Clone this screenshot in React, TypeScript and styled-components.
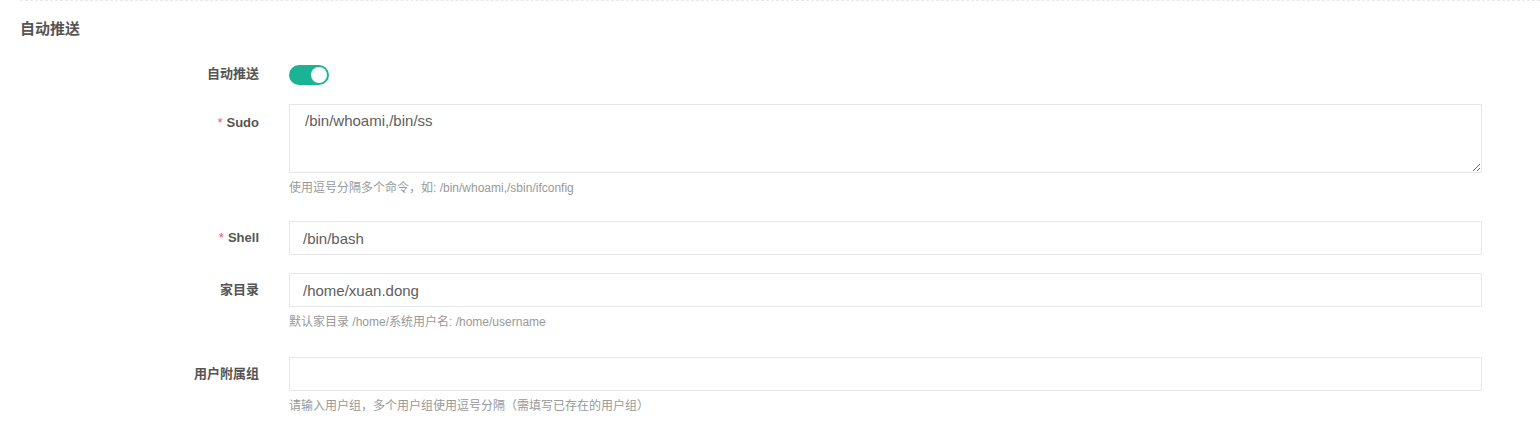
import React from "react";
import styled, {createGlobalStyle} from "styled-components";

const GlobalStyle = createGlobalStyle`
    body {
        margin: 0;
        background: #fff;
        font-family: "Liberation Sans", "Noto Sans CJK SC", sans-serif;
    }
`;

const Section = styled.section`
    padding-left: 20px;
    padding-bottom: 8px;
`;

const Divider = styled.div`
    border-top: 1px dashed #e7eaec;
`;

const Title = styled.h3`
    margin: 0;
    padding-top: 18px;
    font-size: 15px;
    line-height: 20px;
    font-weight: 700;
    color: #555;
`;

const Form = styled.form`
    margin-top: 18px;
    margin-right: 58px;
`;

const FormItem = styled.div<{ $gap: number }>`
    display: flex;
    align-items: flex-start;
    margin-bottom: ${p => p.$gap}px;
`;

const Label = styled.label<{ $top?: number }>`
    flex: 0 0 269px;
    box-sizing: border-box;
    padding-right: 30px;
    padding-top: ${p => p.$top ?? 0}px;
    text-align: right;
    font-size: 13px;
    font-weight: 700;
    line-height: 34px;
    color: #555;
`;

const Required = styled.span`
    color: #ed5565;
    font-weight: 400;
    margin-right: 4px;
`;

const Content = styled.div`
    flex: 1;
    min-width: 0;
`;

const SwitchWrap = styled.div`
    height: 34px;
    display: flex;
    align-items: center;
`;

const Track = styled.span<{ $on: boolean }>`
    position: relative;
    display: inline-block;
    width: 40px;
    height: 20px;
    border-radius: 10px;
    background: ${p => (p.$on ? "#1ab394" : "#dcdfe6")};
    margin-top: 2px;
`;

const Knob = styled.span<{ $on: boolean }>`
    position: absolute;
    top: 2px;
    left: ${p => (p.$on ? "22px" : "2px")};
    width: 16px;
    height: 16px;
    border-radius: 50%;
    background: #fff;
`;

const Input = styled.input`
    display: block;
    width: 100%;
    box-sizing: border-box;
    height: 34px;
    padding: 0 13px;
    border: 1px solid #e5e6e7;
    border-radius: 1px;
    font-family: "Liberation Sans", "Noto Sans CJK SC", sans-serif;
    font-size: 15px;
    color: #5e5e5e;
    outline: none;
`;

const TextArea = styled.textarea`
    display: block;
    width: 100%;
    box-sizing: border-box;
    height: 69px;
    padding: 5px 15px;
    border: 1px solid #e5e6e7;
    border-radius: 1px;
    font-family: "Liberation Sans", "Noto Sans CJK SC", sans-serif;
    font-size: 15px;
    line-height: 22px;
    color: #5e5e5e;
    resize: vertical;
    outline: none;
`;

const Help = styled.div`
    margin-top: 5px;
    font-size: 12px;
    line-height: 20px;
    color: #999;
`;

const App: React.FC = () => {
    return (
        <>
            <GlobalStyle/>
            <Section>
                <Divider/>
                <Title>自动推送</Title>
                <Form>
                    <FormItem $gap={13}>
                        <Label>自动推送</Label>
                        <Content>
                            <SwitchWrap>
                                <Track $on>
                                    <Knob $on/>
                                </Track>
                            </SwitchWrap>
                        </Content>
                    </FormItem>
                    <FormItem $gap={23}>
                        <Label $top={2}><Required>*</Required>Sudo</Label>
                        <Content>
                            <TextArea readOnly value="/bin/whoami,/bin/ss"/>
                            <Help>使用逗号分隔多个命令，如: /bin/whoami,/sbin/ifconfig</Help>
                        </Content>
                    </FormItem>
                    <FormItem $gap={18}>
                        <Label><Required>*</Required>Shell</Label>
                        <Content>
                            <Input readOnly value="/bin/bash"/>
                        </Content>
                    </FormItem>
                    <FormItem $gap={25}>
                        <Label>家目录</Label>
                        <Content>
                            <Input readOnly value="/home/xuan.dong"/>
                            <Help>默认家目录 /home/系统用户名: /home/username</Help>
                        </Content>
                    </FormItem>
                    <FormItem $gap={0}>
                        <Label>用户附属组</Label>
                        <Content>
                            <Input readOnly value=""/>
                            <Help>请输入用户组，多个用户组使用逗号分隔（需填写已存在的用户组）</Help>
                        </Content>
                    </FormItem>
                </Form>
            </Section>
        </>
    );
};

export default App;
